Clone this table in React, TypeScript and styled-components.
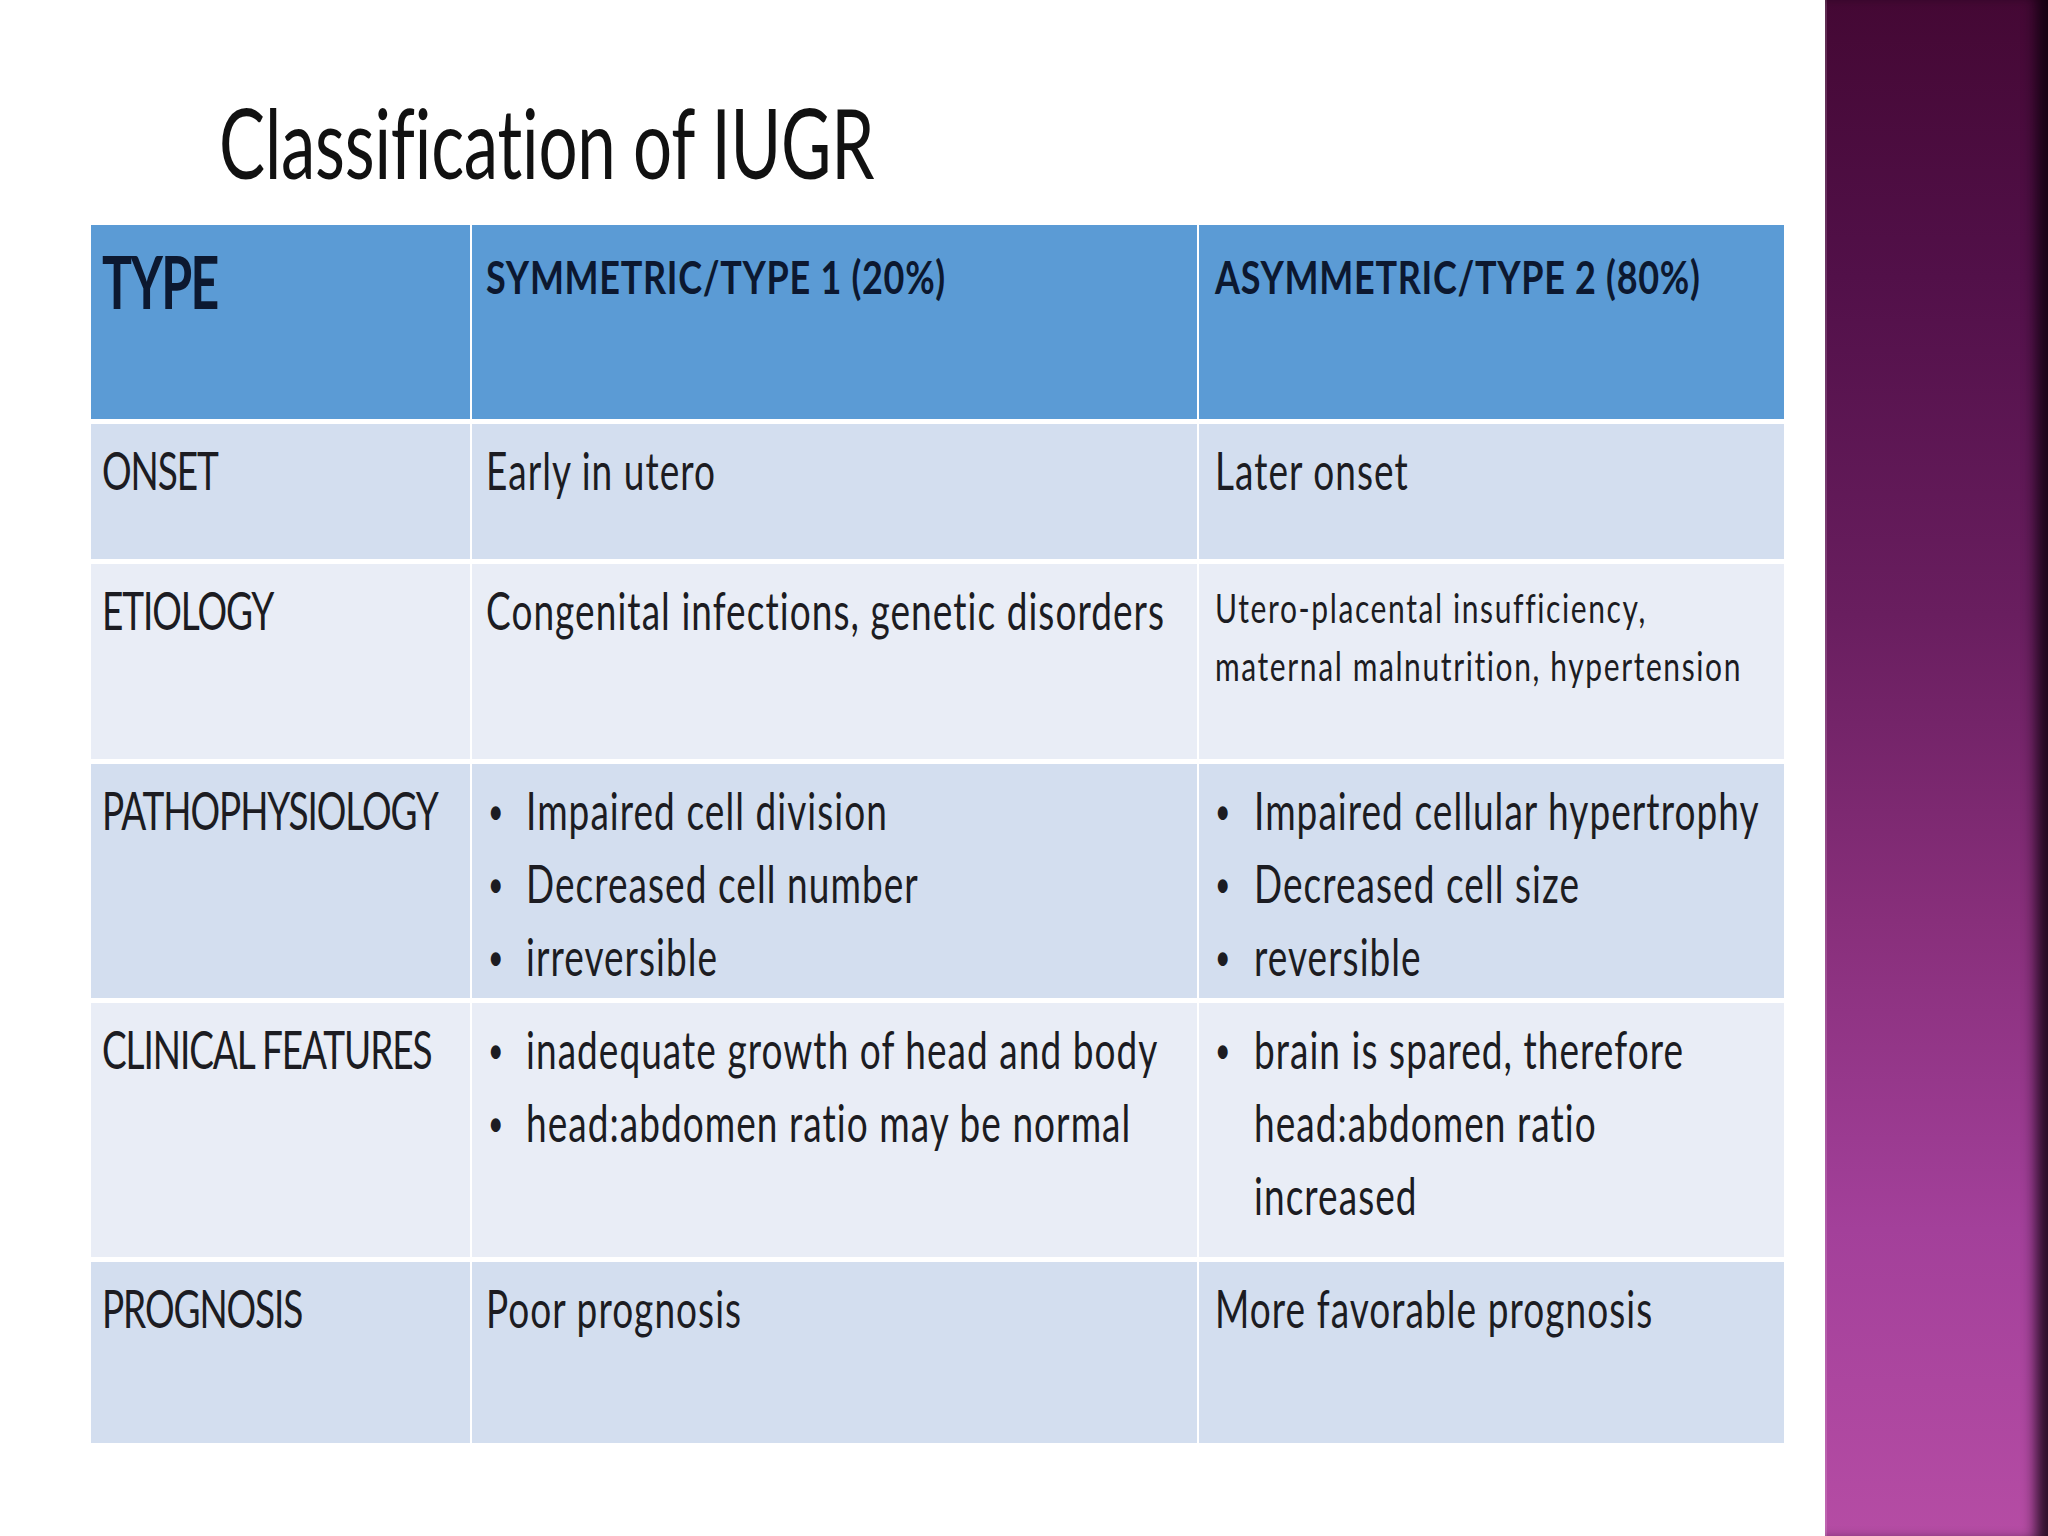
import React from 'react';
import styled, { createGlobalStyle } from 'styled-components';

const GlobalStyle = createGlobalStyle`
  html, body {
    margin: 0;
    padding: 0;
    background: #ffffff;
  }
  body {
    font-family: Lato, "Open Sans", sans-serif;
  }
`;

type Tone = 'head' | 'dark' | 'light';

const tones: Record<Tone, string> = {
  head: '#5b9bd5',
  dark: '#d3deef',
  light: '#e9edf6',
};

// slide is stretched vertically in the picture, so text gets a scaleY
const Page = styled.div`
  display: flex;
  width: 2048px;
  height: 1536px;
  overflow: hidden;
  background: #ffffff;
`;

const Slide = styled.main`
  width: 1825px;
  display: flex;
  flex-direction: column;
`;

const TitleBar = styled.header`
  height: 225px;
  box-sizing: border-box;
  padding: 85px 0 0 219px;
`;

const Title = styled.h1`
  margin: 0;
  display: inline-block;
  font-size: 69px;
  line-height: 1.2;
  font-weight: 400;
  color: #111111;
  letter-spacing: -0.2px;
  transform: scaleY(1.4);
  transform-origin: top left;
`;

const Table = styled.section`
  margin-left: 91px;
  display: grid;
  grid-template-columns: 379px 725px 585px;
  grid-template-rows: 194px 135px 195px 234px 254px 181px;
  column-gap: 2px;
  row-gap: 5px;
`;

const Cell = styled.div<{ $tone: Tone; $padX: number; $padY?: number }>`
  background: ${(p) => tones[p.$tone]};
  box-sizing: border-box;
  padding: ${(p) => p.$padY ?? 10}px 0 0 ${(p) => p.$padX}px;
  overflow: hidden;
`;

const Content = styled.div<{ $size: number; $lh: number; $k: number; $bold?: boolean; $spacing?: number }>`
  font-size: ${(p) => p.$size}px;
  line-height: ${(p) => p.$lh}px;
  font-weight: ${(p) => (p.$bold ? 700 : 400)};
  letter-spacing: ${(p) => p.$spacing ?? 0}px;
  color: ${(p) => (p.$bold ? '#0c1830' : '#1c1c22')};
  white-space: nowrap;
  transform: scaleY(${(p) => p.$k});
  transform-origin: top left;
`;

const Item = styled.div`
  display: flex;
`;

const Bullet = styled.span<{ $w: number }>`
  flex: 0 0 ${(p) => p.$w}px;
  font-size: 0.72em;
  letter-spacing: 0;
`;

const SideBar = styled.aside`
  flex: 1;
  background: linear-gradient(
    180deg,
    #440834 0%,
    #521049 18%,
    #691e5f 40%,
    #882f7b 60%,
    #a3409a 80%,
    #b54ca4 100%
  );
  box-shadow: inset -18px 0 14px -6px rgba(10, 0, 10, 0.8), inset 2px 0 0 rgba(255, 255, 255, 0.15);
`;

const LABEL = { $size: 37, $lh: 52, $k: 1.4, $spacing: -1.1 };
const BODY = { $size: 37, $lh: 52, $k: 1.4, $spacing: 1.05 };

type Bul = { lines: string[] };

const Bullets = ({ items, w }: { items: Bul[]; w: number }) => (
  <Content {...BODY}>
    {items.map((it, i) => (
      <Item key={i}>
        <Bullet $w={w}>•</Bullet>
        <div>
          {it.lines.map((l, j) => (
            <div key={j}>{l}</div>
          ))}
        </div>
      </Item>
    ))}
  </Content>
);

const App = () => {
  return (
    <>
      <GlobalStyle />
      <Page>
        <Slide>
          <TitleBar>
            <Title>Classification of IUGR</Title>
          </TitleBar>
          <Table>
            <Cell $tone="head" $padX={11} $padY={12}>
              <Content $size={50} $lh={60} $k={1.47} $bold $spacing={-1.6}>TYPE</Content>
            </Cell>
            <Cell $tone="head" $padX={14} $padY={25}>
              <Content $size={36} $lh={43} $k={1.25} $bold $spacing={0.7}>SYMMETRIC/TYPE 1 (20%)</Content>
            </Cell>
            <Cell $tone="head" $padX={16} $padY={25}>
              <Content $size={36} $lh={43} $k={1.25} $bold $spacing={0.7}>ASYMMETRIC/TYPE 2 (80%)</Content>
            </Cell>

            <Cell $tone="dark" $padX={11}>
              <Content {...LABEL}>ONSET</Content>
            </Cell>
            <Cell $tone="dark" $padX={14}>
              <Content {...BODY}>Early in utero</Content>
            </Cell>
            <Cell $tone="dark" $padX={16}>
              <Content {...BODY}>Later onset</Content>
            </Cell>

            <Cell $tone="light" $padX={11}>
              <Content {...LABEL}>ETIOLOGY</Content>
            </Cell>
            <Cell $tone="light" $padX={14}>
              <Content {...BODY}>Congenital infections, genetic disorders</Content>
            </Cell>
            <Cell $tone="light" $padX={16} $padY={15}>
              <Content $size={30} $lh={41.5} $k={1.38} $spacing={1.6}>
                <div>Utero-placental insufficiency,</div>
                <div>maternal malnutrition, hypertension</div>
              </Content>
            </Cell>

            <Cell $tone="dark" $padX={11}>
              <Content {...LABEL}>PATHOPHYSIOLOGY</Content>
            </Cell>
            <Cell $tone="dark" $padX={16}>
              <Bullets
                w={38}
                items={[
                  { lines: ['Impaired cell division'] },
                  { lines: ['Decreased cell number'] },
                  { lines: ['irreversible'] },
                ]}
              />
            </Cell>
            <Cell $tone="dark" $padX={16}>
              <Bullets
                w={39}
                items={[
                  { lines: ['Impaired cellular hypertrophy'] },
                  { lines: ['Decreased cell size'] },
                  { lines: ['reversible'] },
                ]}
              />
            </Cell>

            <Cell $tone="light" $padX={11}>
              <Content {...LABEL}>CLINICAL FEATURES</Content>
            </Cell>
            <Cell $tone="light" $padX={16}>
              <Bullets
                w={38}
                items={[
                  { lines: ['inadequate growth of head and body'] },
                  { lines: ['head:abdomen ratio may be normal'] },
                ]}
              />
            </Cell>
            <Cell $tone="light" $padX={16}>
              <Bullets
                w={39}
                items={[{ lines: ['brain is spared, therefore', 'head:abdomen ratio', 'increased'] }]}
              />
            </Cell>

            <Cell $tone="dark" $padX={11}>
              <Content {...LABEL}>PROGNOSIS</Content>
            </Cell>
            <Cell $tone="dark" $padX={14}>
              <Content {...BODY}>Poor prognosis</Content>
            </Cell>
            <Cell $tone="dark" $padX={16}>
              <Content {...BODY}>More favorable prognosis</Content>
            </Cell>
          </Table>
        </Slide>
        <SideBar />
      </Page>
    </>
  );
};

export default App;
